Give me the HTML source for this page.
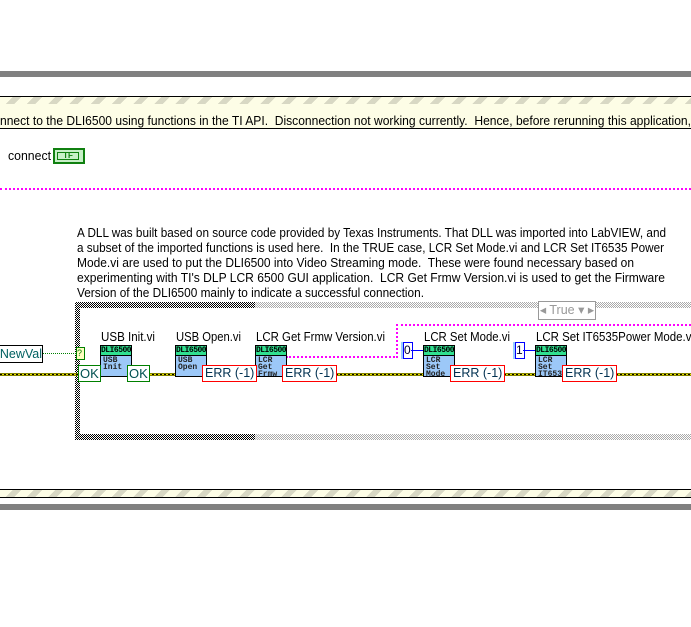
<!DOCTYPE html>
<html><head><style>
body{margin:0;width:691px;height:627px;background:#fff;position:relative;overflow:hidden;font-family:"Liberation Sans",sans-serif;font-size:12px;color:#000}
.a{position:absolute}
.stripe{background:repeating-linear-gradient(135deg,#fdfde6 0 9px,#d8d8c4 9px 15px);border-top:1px solid #000;border-bottom:1px solid #000}
.chk{background:repeating-conic-gradient(#000 0 25%,#fff 0 50%) 0 0/2px 2px}
.chkl{background:repeating-conic-gradient(#aaa 0 25%,#fff 0 50%) 0 0/2px 2px}
.vi{position:absolute;width:30px;height:30px;border:1px solid #000;background:#9cc8f8;font-size:8px;line-height:7px;font-family:"Liberation Mono",monospace;font-weight:bold;color:#222;overflow:hidden}
.vi b{display:block;background:#30e090;color:#000;font-size:8px;height:9px;line-height:9px;border-bottom:1px solid #000;text-align:center;letter-spacing:-0.5px}
.vi span{display:block;padding-left:2px;padding-top:1px}
.ok{position:absolute;border:1px solid #008000;background:#fff;color:#005050;font-size:13px;line-height:15px;padding:0 1px}
.err{position:absolute;border:1px solid #f00;background:#fff;color:#003050;font-size:12.5px;line-height:15px;padding:0 2px;white-space:nowrap}
svg{position:absolute;left:0;top:0}
text{font-family:"Liberation Sans",sans-serif;font-size:12.5px}
</style></head><body>
<div class="a" style="left:0;top:71px;width:691px;height:6px;background:#808080"></div>
<div class="a stripe" style="left:0;top:96px;width:691px;height:7px"></div>
<div class="a" style="left:0;top:104px;width:691px;height:24px;background:#fdfde6;border-bottom:1px solid #000"></div>
<div class="a" style="left:53px;top:148px;width:28px;height:12px;border:2px solid #108010;background:#c8f0c8"><div style="margin:2px;height:6px;border:1px solid #108010;font-size:8px;line-height:6px;font-weight:bold;color:#108010;text-align:center;width:20px">TF</div></div>
<div class="a" style="left:0;top:188px;width:691px;border-top:2px dotted #f0f"></div>
<div class="a chk" style="left:75px;top:302px;width:180px;height:6px"></div>
<div class="a chkl" style="left:255px;top:302px;width:436px;height:6px"></div>
<div class="a chk" style="left:75px;top:302px;width:5px;height:138px"></div>
<div class="a chk" style="left:75px;top:434px;width:180px;height:6px"></div>
<div class="a chkl" style="left:255px;top:434px;width:436px;height:6px"></div>
<div class="a" style="left:538px;top:301px;width:56px;height:17px;border:1px solid #999;background:#fff;color:#999;font-size:12.5px;line-height:17px;text-align:center">◂ True ▾ ▸</div>
<div class="a" style="left:0;top:373px;width:691px;height:3px;background:repeating-linear-gradient(90deg,#000 0 2px,#e8e000 2px 4px);border-top:1px solid #808000;border-bottom:1px solid #808000;box-sizing:border-box"></div>
<div class="a" style="left:42px;top:353px;width:36px;border-top:1px dotted #008000"></div>
<div class="a" style="left:286px;top:356px;width:112px;border-top:2px dotted #f0f"></div>
<div class="a" style="left:396px;top:324px;height:34px;border-left:2px dotted #f0f"></div>
<div class="a" style="left:396px;top:324px;width:295px;border-top:2px dotted #f0f"></div>
<div class="a" style="left:-4px;top:345px;width:45px;height:16px;border:1px solid #000;font-size:12.5px;color:#006060;line-height:16px;overflow:hidden;white-space:nowrap;text-align:right;padding-right:0">NewVal</div>
<div class="a" style="left:76px;top:347px;width:7px;height:11px;border:1px solid #008000;background:#ffffc0;font-size:9px;line-height:11px;color:#008000">?</div>
<div class="vi" style="left:100px;top:345px"><b>DLI6500</b><span>USB<br>Init</span></div>
<div class="vi" style="left:175px;top:345px"><b>DLI6500</b><span>USB<br>Open</span></div>
<div class="vi" style="left:255px;top:345px"><b>DLI6500</b><span>LCR<br>Get<br>Frmw</span></div>
<div class="vi" style="left:423px;top:345px"><b>DLI6500</b><span>LCR<br>Set<br>Mode</span></div>
<div class="vi" style="left:535px;top:345px"><b>DLI6500</b><span>LCR<br>Set<br>IT6535P</span></div>
<div class="a" style="left:403px;top:342px;width:8px;height:15px;border:1px solid #00f;background:#fff;box-shadow:-2px 0 0 #9cf;font-size:12px;line-height:15px;color:#003">0</div>
<div class="a" style="left:411px;top:350px;width:12px;border-top:1px solid #00f"></div>
<div class="a" style="left:515px;top:342px;width:8px;height:15px;border:1px solid #00f;background:#fff;box-shadow:-2px 0 0 #9cf;font-size:12px;line-height:15px;color:#003">1</div>
<div class="a" style="left:523px;top:350px;width:12px;border-top:1px solid #00f"></div>
<div class="ok" style="left:78px;top:365px">OK</div>
<div class="ok" style="left:127px;top:365px">OK</div>
<div class="err" style="left:202px;top:365px">ERR (-1)</div>
<div class="err" style="left:282px;top:365px">ERR (-1)</div>
<div class="err" style="left:450px;top:365px">ERR (-1)</div>
<div class="err" style="left:562px;top:365px">ERR (-1)</div>
<div class="a stripe" style="left:0;top:489px;width:691px;height:7px"></div>
<div class="a" style="left:0;top:504px;width:691px;height:6px;background:#808080"></div>
<svg width="691" height="627">
<text x="0" y="125" textLength="691" lengthAdjust="spacingAndGlyphs" xml:space="preserve">nnect to the DLI6500 using functions in the TI API.  Disconnection not working currently.  Hence, before rerunning this application,</text>
<text x="8" y="160" textLength="43" lengthAdjust="spacingAndGlyphs">connect</text>
<text x="77" y="237" textLength="589" lengthAdjust="spacingAndGlyphs">A DLL was built based on source code provided by Texas Instruments. That DLL was imported into LabVIEW, and</text>
<text x="77" y="252" textLength="587" lengthAdjust="spacingAndGlyphs" xml:space="preserve">a subset of the imported functions is used here.  In the TRUE case, LCR Set Mode.vi and LCR Set IT6535 Power</text>
<text x="77" y="267" textLength="557" lengthAdjust="spacingAndGlyphs" xml:space="preserve">Mode.vi are used to put the DLI6500 into Video Streaming mode.  These were found necessary based on</text>
<text x="77" y="282" textLength="588" lengthAdjust="spacingAndGlyphs" xml:space="preserve">experimenting with TI's DLP LCR 6500 GUI application.  LCR Get Frmw Version.vi is used to get the Firmware</text>
<text x="77" y="297" textLength="347" lengthAdjust="spacingAndGlyphs">Version of the DLI6500 mainly to indicate a successful connection.</text>
<text x="101" y="341" textLength="54" lengthAdjust="spacingAndGlyphs">USB Init.vi</text>
<text x="176" y="341" textLength="65" lengthAdjust="spacingAndGlyphs">USB Open.vi</text>
<text x="256" y="341" textLength="129" lengthAdjust="spacingAndGlyphs">LCR Get Frmw Version.vi</text>
<text x="424" y="341" textLength="86" lengthAdjust="spacingAndGlyphs">LCR Set Mode.vi</text>
<text x="536" y="341" textLength="158" lengthAdjust="spacingAndGlyphs">LCR Set IT6535Power Mode.vi</text>
</svg>
</body></html>
